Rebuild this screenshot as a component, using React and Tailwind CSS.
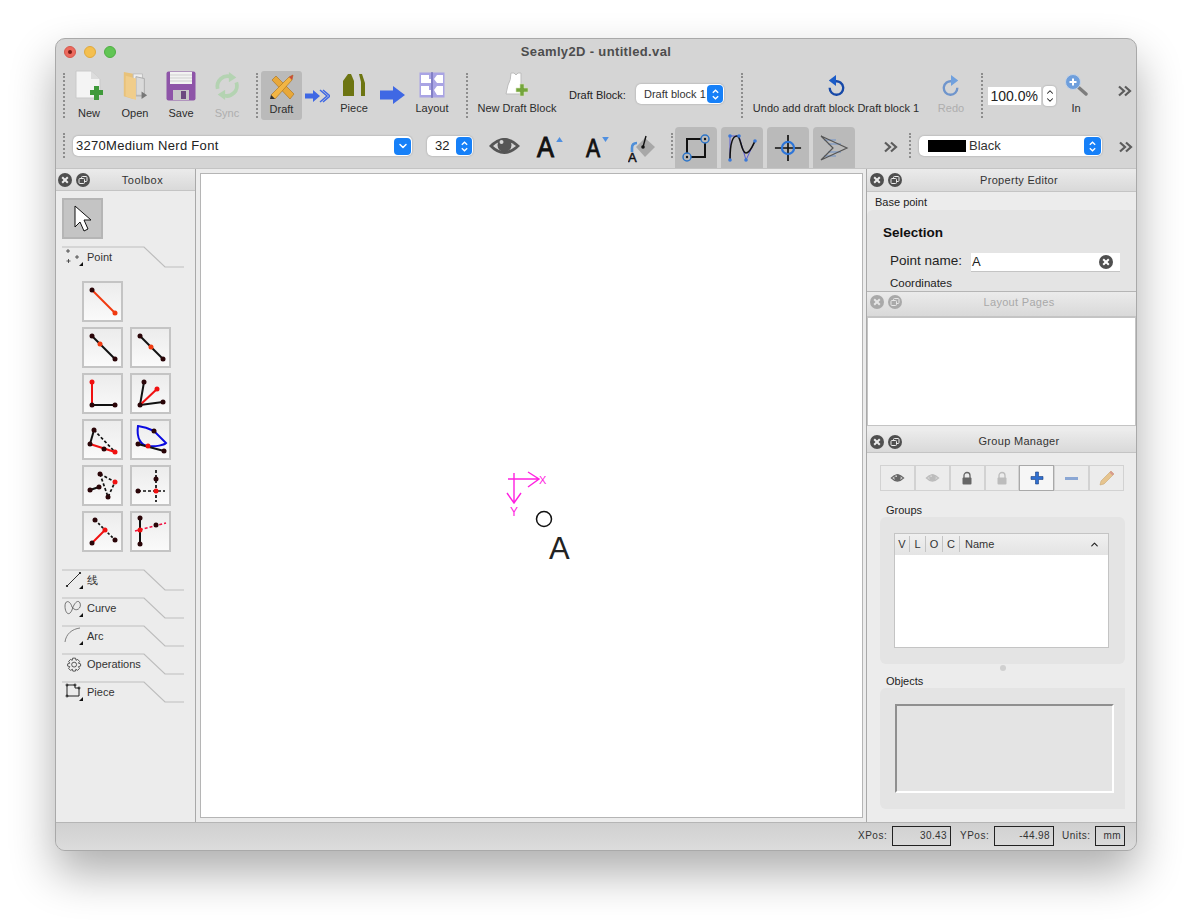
import { ChevronDown, ChevronUp } from 'lucide-react';

const FONT = { fontFamily: '"Liberation Sans", Arial, sans-serif' };

function Grip({ className = 'h-[45px]' }) {
  return <div className={`w-[2px] shrink-0 border-l-2 border-dotted border-[#8d8d8d] ${className}`} />;
}

function Chevrons() {
  return (
    <svg viewBox="0 0 16 12" className="w-[16px] h-[12px] shrink-0">
      <path d="M2 1.5 L7 6 L2 10.5 M8 1.5 L13 6 L8 10.5" fill="none" stroke="#5c5c5c" strokeWidth="2.2" />
    </svg>
  );
}

function UpDown({ className = 'w-[16px] h-[16px]' }) {
  return (
    <div className={`${className} rounded-[4px] bg-[#1680f8] flex items-center justify-center shrink-0`}>
      <svg viewBox="0 0 10 14" className="w-[9px] h-[13px]">
        <path d="M2 5 L5 2.2 L8 5 M2 9 L5 11.8 L8 9" fill="none" stroke="#fff" strokeWidth="1.5" />
      </svg>
    </div>
  );
}

function ToolBtn({ label, width, children, muted, active, top = 'pt-[1px]', gap = 'mt-[1px]', className = '' }) {
  return (
    <div className={`flex flex-col items-center shrink-0 ${top} ${active ? 'bg-[#bababa] rounded-[3px] h-[49px]' : ''} ${className}`} style={{ width }}>
      <div className="h-[32px] flex items-center justify-center">{children}</div>
      <span className={`text-[11px] leading-[13px] whitespace-nowrap ${gap} ${muted ? 'text-[#aeaeae]' : 'text-[#2c2c2c]'}`}>{label}</span>
    </div>
  );
}

function NewIcon() {
  return (
    <svg viewBox="0 0 30 32" className="w-[30px] h-[32px]">
      <path d="M2 1 H17 L26 9 V28 H2 Z" fill="#f4f4f4" stroke="#c9c9c9" />
      <path d="M17 1 V9 H26 Z" fill="#dcdcdc" />
      <path d="M16 20 H20 V16 H25 V20 H29 V25 H25 V30 H20 V25 H16 Z" fill="#3f9a3a" />
    </svg>
  );
}

function OpenIcon() {
  return (
    <svg viewBox="0 0 30 32" className="w-[28px] h-[32px]">
      <path d="M3 1 L13 3 V30 L3 27 Z" fill="#e8c27a" />
      <path d="M13 3 H23 V27 H13 Z" fill="#eee" stroke="#bbb" />
      <path d="M16 6 L25 8 V26 H16 Z" fill="#dadada" stroke="#aaa" />
      <path d="M5 5 L16 8 V31 L5 27 Z" fill="#f0cd8b" />
      <path d="M22 22 L28 26 L22 30 Z" fill="#777" />
    </svg>
  );
}

function SaveIcon() {
  return (
    <svg viewBox="0 0 30 30" className="w-[30px] h-[30px]">
      <rect x="0.5" y="0.5" width="29" height="29" rx="2" fill="#8e54a8" />
      <rect x="4" y="1" width="22" height="12" fill="#f2f2f2" />
      <path d="M4 4 H26 M4 7 H26 M4 10 H26" stroke="#cfcfcf" />
      <rect x="7" y="19" width="16" height="10" fill="#c9c9c9" />
      <rect x="15" y="20" width="5" height="8" fill="#6c4a80" />
    </svg>
  );
}

function SyncIcon() {
  return (
    <svg viewBox="0 0 30 32" className="w-[28px] h-[32px]">
      <path d="M5 19 A11 11 0 0 1 19 6" fill="none" stroke="#b4d3b2" strokeWidth="4" />
      <path d="M17 1 L25 7 L17 12 Z" fill="#b4d3b2" />
      <path d="M25 12 A11 11 0 0 1 11 26" fill="none" stroke="#b4d3b2" strokeWidth="4" />
      <path d="M13 31 L5 25 L13 20 Z" fill="#b4d3b2" />
    </svg>
  );
}

function DraftIcon() {
  return (
    <svg viewBox="0 0 26 26" className="w-[26px] h-[26px]">
      <path d="M3 6 L7 2 L25 20 L21 25 Z" fill="#e8a83a" stroke="#a9701a" strokeWidth="0.6" />
      <path d="M2 21 L20 3 L24 1 L23 6 L6 25 Z" fill="#f2b544" stroke="#a9701a" strokeWidth="0.6" />
      <path d="M20 3 L24 1 L23 6 Z" fill="#c94a3b" />
      <path d="M2 21 L6 25 L1 25 Z" fill="#333" />
    </svg>
  );
}

function SmallArrow() {
  return (
    <svg viewBox="0 0 25 14" className="w-[25px] h-[14px]">
      <path d="M0 4.5 H8 V1 L15 7 L8 13 V9.5 H0 Z" fill="#3f68e4" />
      <path d="M15 1 L22 7 L15 13 M18 1 L25 7 L18 13" fill="none" stroke="#3f68e4" strokeWidth="1.5" />
    </svg>
  );
}

function BigArrow() {
  return (
    <svg viewBox="0 0 25 18" className="w-[25px] h-[18px]">
      <path d="M0 4.5 H13 V0 L25 9 L13 18 V13.5 H0 Z" fill="#3f68e4" />
    </svg>
  );
}

function PieceIcon() {
  return (
    <svg viewBox="0 0 24 24" className="w-[24px] h-[24px]">
      <path d="M1 23 V8 L6 1 H9 L12 8 V23 Z" fill="#6d7512" />
      <path d="M17 1 H20 L23 10 V23 H19 V9 Z" fill="#6d7512" />
    </svg>
  );
}

function LayoutIcon() {
  return (
    <svg viewBox="0 0 26 26" className="w-[26px] h-[26px]">
      <rect x="0.5" y="0.5" width="25" height="25" fill="#a9a4e4" />
      <path d="M2 3 H10 V7 H12 V11 H2 Z M2 14 H10 V18 H12 V23 H2 Z M24 3 V11 H18 L15 7 L18 3 Z M24 14 V23 H18 L15 18 L18 14 Z" fill="#fff" />
      <path d="M13 0 V26" stroke="#5a5aa8" />
    </svg>
  );
}

function NewBlockIcon() {
  return (
    <svg viewBox="0 0 24 26" className="w-[24px] h-[26px]">
      <path d="M6 1 H9 L11 3 L13 1 H16 V22 H1 L3 13 Q6 8 6 1 Z" fill="#fff" stroke="#bdbdbd" />
      <path d="M11 16 H15 V12 H19 V16 H23 V20 H19 V24 H15 V20 H11 Z" fill="#74a53c" stroke="#d6e3b8" strokeWidth="0.6" />
    </svg>
  );
}

function UndoIcon() {
  return (
    <svg viewBox="0 0 20 24" className="w-[18px] h-[22px]">
      <path d="M9 8 A7.5 7.5 0 1 1 3 15" fill="none" stroke="#1749a8" strokeWidth="2.6" />
      <path d="M10 1 L2 7 L10 13 Z" fill="#1b5cc8" />
    </svg>
  );
}

function RedoIcon() {
  return (
    <svg viewBox="0 0 20 24" className="w-[18px] h-[22px]">
      <path d="M11 8 A7.5 7.5 0 1 0 17 15" fill="none" stroke="#6f95cc" strokeWidth="2.6" />
      <path d="M10 1 L18 7 L10 13 Z" fill="#6fa0de" />
    </svg>
  );
}

function ZoomIcon() {
  return (
    <svg viewBox="0 0 24 24" className="w-[24px] h-[24px]">
      <path d="M13 13 L22 21" stroke="#7d7d7d" strokeWidth="3.4" strokeLinecap="round" />
      <circle cx="9" cy="9" r="7.5" fill="#6f9fdc" stroke="#c4d3e6" />
      <path d="M5.5 9 H12.5 M9 5.5 V12.5" stroke="#fff" strokeWidth="2" />
    </svg>
  );
}

function EyeIcon({ fill = '#555', className = 'w-[33px] h-[22px]' }) {
  return (
    <svg viewBox="0 0 33 22" className={className}>
      <path d="M1 11 Q16 -5 32 11 Q16 27 1 11 Z" fill={fill} />
      <path d="M5 11 Q16 1 28 11 Q16 21 5 11 Z" fill="#d5d5d5" />
      <circle cx="16.5" cy="10" r="7" fill={fill} />
      <circle cx="13.5" cy="7" r="2" fill="#d5d5d5" />
    </svg>
  );
}

function PaintIcon() {
  return (
    <svg viewBox="0 0 28 32" className="w-[28px] h-[32px]">
      <path d="M17 5 L27 14 L17 24 L8 14 Z" fill="#a8a8a8" />
      <path d="M15 14 L18 3" stroke="#111" strokeWidth="1.4" />
      <circle cx="15" cy="14" r="1.8" fill="#111" />
      <path d="M4 19 V15 Q4 10 9 10" fill="none" stroke="#4f8fd8" strokeWidth="2.6" />
      <text x="0" y="29" fontSize="13" fill="#111" stroke="#111" strokeWidth="0.5" style={FONT}>A</text>
    </svg>
  );
}

function ModeButton({ children }) {
  return <div className="w-[42px] h-[41px] bg-[#bababa] rounded-t-[4px] flex items-center justify-center shrink-0">{children}</div>;
}

function RectIcon() {
  return (
    <svg viewBox="0 0 28 28" className="w-[28px] h-[28px]">
      <path d="M5 5 H23 V23 H5 Z" fill="none" stroke="#111" strokeWidth="2" />
      <circle cx="23" cy="5" r="4" fill="#bababa" stroke="#2d75c8" strokeWidth="1.5" />
      <circle cx="5" cy="23" r="4" fill="#bababa" stroke="#2d75c8" strokeWidth="1.5" />
      <circle cx="23" cy="5" r="1.2" fill="#111" />
      <circle cx="5" cy="23" r="1.2" fill="#111" />
    </svg>
  );
}

function SplineIcon() {
  return (
    <svg viewBox="0 0 30 30" className="w-[30px] h-[30px]">
      <path d="M3 27 L3 3 L12 3 L19 27 L28 8" fill="none" stroke="#5b5bd6" strokeWidth="1" />
      <path d="M3 27 C3 8 6 3 10 3 C14 3 14 20 19 20 C23 20 26 12 28 8" fill="none" stroke="#111" strokeWidth="1.6" />
      <circle cx="3" cy="27" r="1.8" fill="#3a78d8" />
      <circle cx="3" cy="3" r="1.8" fill="#3a78d8" />
      <circle cx="12" cy="3" r="1.8" fill="#3a78d8" />
      <circle cx="19" cy="27" r="1.8" fill="#3a78d8" />
      <circle cx="28" cy="8" r="1.8" fill="#3a78d8" />
    </svg>
  );
}

function PointModeIcon() {
  return (
    <svg viewBox="0 0 30 30" className="w-[28px] h-[28px]">
      <path d="M15 1 V29 M1 15 H29" stroke="#111" strokeWidth="1.8" />
      <circle cx="15" cy="15" r="6.5" fill="none" stroke="#2d75d8" strokeWidth="2.4" />
    </svg>
  );
}

function PieceModeIcon() {
  return (
    <svg viewBox="0 0 30 30" className="w-[30px] h-[30px]">
      <path d="M5 7 H17 M9 11 H22 M9 19 H22 M5 23 H17" stroke="#6d8fc8" strokeWidth="1.2" />
      <path d="M2 3 L28 15 L2 27 M2 3 L14 15 L2 27" fill="none" stroke="#555" strokeWidth="1.2" />
    </svg>
  );
}

function DockButtons({ dim }) {
  const bg = dim ? '#a9a9a9' : '#4f4f4f';
  const fg = dim ? '#e6e6e6' : '#ececec';
  return (
    <div className="flex items-center gap-[4px]">
      <svg viewBox="0 0 14 14" className="w-[14px] h-[14px]">
        <circle cx="7" cy="7" r="7" fill={bg} />
        <path d="M4.2 4.2 L9.8 9.8 M9.8 4.2 L4.2 9.8" stroke={fg} strokeWidth="2" />
      </svg>
      <svg viewBox="0 0 14 14" className="w-[14px] h-[14px]">
        <circle cx="7" cy="7" r="7" fill={bg} />
        <rect x="5.5" y="3.5" width="5.5" height="5" rx="1" fill="none" stroke={fg} />
        <rect x="3" y="5.5" width="5.5" height="5" rx="1" fill={bg} stroke={fg} />
      </svg>
    </div>
  );
}

function DockTitle({ title, dim, className = 'h-[23px]' }) {
  return (
    <div className={`${className} shrink-0 flex items-center pl-[3px] bg-gradient-to-b from-[#ebebeb] to-[#d9d9d9] border-b border-[#c4c4c4]`}>
      <DockButtons dim={dim} />
      <span className={`flex-1 text-center text-[11px] tracking-[0.3px] ${dim ? 'text-[#a9a9a9]' : 'text-[#333]'}`}>{title}</span>
    </div>
  );
}

const dot = (x, y, fill = '#2a0508', r = 2.5) => <circle cx={x} cy={y} r={r} fill={fill} />;
const RED = '#f01010';
const ORANGE = '#f03a10';

const TOOLS = [
  <>
    <path d="M10 9 L33 32" stroke={ORANGE} strokeWidth="2" />
    {dot(10, 9)}{dot(33, 32, ORANGE)}
  </>,
  <>
    <path d="M10 9 L33 32" stroke="#111" strokeWidth="2" />
    {dot(10, 9)}{dot(33, 32)}{dot(18, 17, ORANGE)}
  </>,
  <>
    <path d="M10 9 L33 32" stroke="#111" strokeWidth="2" />
    {dot(10, 9)}{dot(33, 32)}{dot(21, 20, ORANGE)}
  </>,
  <>
    <path d="M10 9 V32" stroke={RED} strokeWidth="2" />
    <path d="M10 32 H33" stroke="#111" strokeWidth="2" />
    {dot(10, 9, RED)}{dot(10, 32)}{dot(33, 32)}
  </>,
  <>
    <path d="M10 32 L14 9 M10 32 L33 29" stroke="#111" strokeWidth="2" />
    <path d="M10 32 L27 16" stroke={RED} strokeWidth="2" />
    {dot(14, 9)}{dot(10, 32)}{dot(27, 16, RED)}{dot(33, 29)}
  </>,
  <>
    <path d="M12 11 L8 25" stroke="#111" strokeWidth="2" />
    <path d="M12 11 L33 33" stroke="#111" strokeWidth="1.7" strokeDasharray="3 2" />
    <path d="M8 25 L33 33" stroke={RED} strokeWidth="2" />
    {dot(12, 11)}{dot(8, 25)}{dot(22, 30)}{dot(33, 33, RED)}
  </>,
  <>
    <path d="M8 7 C6 20 12 27 18 27 C26 28 34 26 36 24 L24 12 Q16 8 8 7 Z" fill="none" stroke="#0a0ae0" strokeWidth="2" />
    <path d="M8 25 L34 32" stroke="#111" strokeWidth="2" />
    {dot(24, 12)}{dot(8, 25)}{dot(34, 32)}{dot(18, 27, RED)}
  </>,
  <>
    <path d="M8 25 L17 22" stroke="#111" strokeWidth="2" />
    <path d="M18 9 L33 17 L26 32 Z" fill="none" stroke="#111" strokeWidth="1.7" strokeDasharray="3 2" />
    {dot(18, 9)}{dot(33, 17, RED)}{dot(26, 32)}{dot(17, 22)}{dot(8, 25)}
  </>,
  <>
    <path d="M26 5 V37 M8 26 H35" stroke="#111" strokeWidth="1.7" strokeDasharray="3 2" />
    {dot(26, 14)}{dot(8, 26)}{dot(26, 26, RED)}
  </>,
  <>
    <path d="M13 9 L33 29" stroke="#111" strokeWidth="1.7" strokeDasharray="2.5 2" />
    <path d="M10 32 L23 19" stroke={RED} strokeWidth="2" />
    {dot(13, 9)}{dot(33, 29)}{dot(10, 32)}{dot(23, 19, RED)}
  </>,
  <>
    <path d="M10 7 V33" stroke="#111" strokeWidth="2" />
    <path d="M5 20 L36 12" stroke="#f01040" strokeWidth="1.7" strokeDasharray="3 2" />
    {dot(10, 7)}{dot(10, 33)}{dot(26, 14)}{dot(10, 19, RED)}
  </>,
];

function ToolTile({ children }) {
  return (
    <div className="w-[41px] h-[41px] border-2 border-[#c4c4c4] bg-gradient-to-b from-[#ececec] to-[#fafafa] shrink-0">
      <svg viewBox="2 2 37 37" className="w-[37px] h-[37px]">{children}</svg>
    </div>
  );
}

function Tab({ label, icon, className = 'h-[28px]' }) {
  return (
    <div className={`relative pl-[6px] flex items-start ${className}`}>
      <svg viewBox="0 0 122 22" className="absolute left-[6px] top-0 w-[122px] h-[22px]">
        <path d="M0 1 H82 L103 21 H122" fill="none" stroke="#bdbdbd" strokeWidth="1.2" />
      </svg>
      <div className="w-[24px] h-[22px] flex items-center justify-center">{icon}</div>
      <span className="text-[11px] leading-[22px] ml-[1px] text-[#333]">{label}</span>
    </div>
  );
}

const corner = <path d="M20 16 V20 H16 Z" fill="#111" />;

function PointTabIcon() {
  return (
    <svg viewBox="0 0 22 22" className="w-[22px] h-[22px]">
      <path d="M5 3 V7 M3 5 H7 M5.5 13 V17 M3.5 15 H7.5 M14 9 V13 M12 11 H16" stroke="#333" strokeWidth="0.8" />
      {corner}
    </svg>
  );
}

function LineTabIcon() {
  return (
    <svg viewBox="0 0 22 22" className="w-[22px] h-[22px]">
      <path d="M4 17 L17 4" stroke="#333" />
      <circle cx="4" cy="17" r="1.1" fill="#111" /><circle cx="17" cy="4" r="1.1" fill="#111" />
      {corner}
    </svg>
  );
}

function CurveTabIcon() {
  return (
    <svg viewBox="0 0 22 22" className="w-[22px] h-[22px]">
      <path d="M9 10 C7 3 2 3 2 9 C2 16 6 20 9 13 C11 6 15 2 17 6 C19 11 13 16 9 10 Z" fill="none" stroke="#555" strokeWidth="0.8" />
      {corner}
    </svg>
  );
}

function ArcTabIcon() {
  return (
    <svg viewBox="0 0 22 22" className="w-[22px] h-[22px]">
      <path d="M2 17 C3 9 9 4 17 3" fill="none" stroke="#666" strokeWidth="0.8" />
      {corner}
    </svg>
  );
}

function GearTabIcon() {
  return (
    <svg viewBox="0 0 22 22" className="w-[22px] h-[22px]">
      <g transform="translate(3.2 3.7) scale(0.72)">
        <path d="M9 2 H13 L13.6 5 L16 3.8 L18.6 6.6 L17 9 L20 10 V13 L17 13.8 L18.4 16.4 L15.8 19 L13.4 17.4 L12.8 20 H9.2 L8.6 17.4 L6 19 L3.4 16.4 L5 13.8 L2 13 V10 L5 9 L3.4 6.6 L6 3.8 L8.4 5 Z" fill="none" stroke="#333" strokeWidth="1.1" />
        <circle cx="11" cy="11" r="3.4" fill="none" stroke="#333" strokeWidth="1.1" />
      </g>
    </svg>
  );
}

function PieceTabIcon() {
  return (
    <svg viewBox="0 0 22 22" className="w-[22px] h-[22px]">
      <path d="M4 4 V15 H16 V7 H12 V4 Z" fill="none" stroke="#222" />
      <path d="M2.5 4 H5.5 M4 2.5 V5.5 M10.5 4 H13.5 M12 2.5 V5.5 M14.5 7 H17.5 M16 5.5 V8.5 M2.5 15 H5.5 M4 13.5 V16.5" stroke="#222" strokeWidth="1" />
      {corner}
    </svg>
  );
}

function GroupBtn({ children, active }) {
  return (
    <div className={`h-[26px] flex-1 flex items-center justify-center border ${active ? 'border-[#a9a9a9] bg-[#f6f6f6]' : 'border-[#d2d2d2] bg-[#ececec]'}`}>
      {children}
    </div>
  );
}

function LockIcon({ color }) {
  return (
    <svg viewBox="0 0 12 14" className="w-[12px] h-[14px]">
      <path d="M3 7 V4.5 A3 3 0 0 1 9 4.5 V7" fill="none" stroke={color} strokeWidth="1.3" />
      <rect x="1.5" y="6.5" width="9" height="7" rx="1" fill={color} />
    </svg>
  );
}

function StatusField({ label, value, labelW, fieldW }) {
  return (
    <>
      <span className="text-[10px] tracking-[0.5px] text-[#333] whitespace-nowrap" style={{ width: labelW }}>{label}</span>
      <div className="h-[20px] border border-[#222] flex items-center justify-end pr-[3px] text-[10px] tracking-[0.4px] text-[#333]" style={{ width: fieldW }}>{value}</div>
    </>
  );
}

export default function App() {
  return (
    <div className="w-[1192px] h-[924px] bg-white pt-[38px] pl-[55px] overflow-hidden" style={FONT}>
      <div className="w-[1082px] h-[813px] flex flex-col rounded-[10px] border border-[#a9a9a9] overflow-hidden shadow-[0_22px_45px_rgba(0,0,0,0.32)] bg-[#d5d5d5]">
        {/* Title bar */}
        <div className="h-[29px] shrink-0 grid grid-cols-[1fr_auto_1fr] items-center pb-[3px]">
          <div className="flex items-center gap-[8px] pl-[8px]">
            <div className="w-[12px] h-[12px] rounded-full bg-[#ec6a5e] border border-[#d5574c] flex items-center justify-center">
              <div className="w-[4px] h-[4px] rounded-full bg-[#7a1a14]" />
            </div>
            <div className="w-[12px] h-[12px] rounded-full bg-[#f4bf4f] border border-[#dfa93c]" />
            <div className="w-[12px] h-[12px] rounded-full bg-[#61c554] border border-[#4fae43]" />
          </div>
          <span className="text-[13px] font-bold tracking-[0.35px] text-[#4d4d4d]">Seamly2D - untitled.val</span>
          <div />
        </div>

        {/* Main toolbar */}
        <div className="h-[54px] shrink-0 flex items-start">
          <Grip className="h-[45px] ml-[7px] mt-[5px]" />
          <div className="flex ml-[1px]">
            <ToolBtn label="New" width={46} top="pt-[2px]" gap="mt-[5px]"><NewIcon /></ToolBtn>
            <ToolBtn label="Open" width={46} top="pt-[2px]" gap="mt-[5px]"><OpenIcon /></ToolBtn>
            <ToolBtn label="Save" width={46} top="pt-[2px]" gap="mt-[5px]"><SaveIcon /></ToolBtn>
            <ToolBtn label="Sync" width={46} top="pt-[2px]" muted gap="mt-[5px]"><SyncIcon /></ToolBtn>
          </div>
          <Grip className="h-[45px] ml-[6px] mt-[5px]" />
          <ToolBtn label="Draft" width={41} active top="pt-0" gap="mt-0" className="ml-[3px] mt-[3px]"><DraftIcon /></ToolBtn>
          <div className="ml-[3px] mt-[21px]"><SmallArrow /></div>
          <ToolBtn label="Piece" width={40} className="ml-[4px]"><PieceIcon /></ToolBtn>
          <div className="ml-[6px] mt-[18px]"><BigArrow /></div>
          <ToolBtn label="Layout" width={44} className="ml-[5px]"><LayoutIcon /></ToolBtn>
          <Grip className="h-[45px] ml-[12px] mt-[5px]" />
          <ToolBtn label="New Draft Block" width={84} className="ml-[7px]"><NewBlockIcon /></ToolBtn>
          <span className="ml-[10px] mt-[20px] w-[57px] shrink-0 text-[11px] leading-[14px] text-[#222] whitespace-nowrap">Draft Block:</span>
          <div className="ml-[10px] mt-[16px] w-[88px] h-[20px] shrink-0 bg-white rounded-[5px] shadow-[0_0_2px_rgba(0,0,0,0.3)] flex items-center pl-[8px] pr-[1px] justify-between">
            <span className="text-[11px] text-[#333] whitespace-nowrap">Draft block 1</span>
            <UpDown className="w-[16px] h-[18px]" />
          </div>
          <Grip className="h-[45px] ml-[17px] mt-[5px]" />
          <ToolBtn label="Undo add draft block Draft block 1" width={166} className="ml-[10px]"><UndoIcon /></ToolBtn>
          <ToolBtn label="Redo" width={40} muted className="ml-[12px]"><RedoIcon /></ToolBtn>
          <Grip className="h-[45px] ml-[10px] mt-[5px]" />
          <div className="ml-[5px] mt-[18px] flex items-center shrink-0">
            <div className="w-[53px] h-[18px] bg-white flex items-center justify-end pr-[3px] text-[14px] text-[#222]">100.0%</div>
            <div className="ml-[2px] w-[13px] h-[20px] bg-white rounded-[4px] shadow-[0_0_2px_rgba(0,0,0,0.3)] flex flex-col items-center justify-center">
              <ChevronUp size={10} strokeWidth={2.5} className="text-[#222] -mb-[1px]" />
              <ChevronDown size={10} strokeWidth={2.5} className="text-[#222] -mt-[1px]" />
            </div>
          </div>
          <ToolBtn label="In" width={30} className="ml-[5px]"><ZoomIcon /></ToolBtn>
          <div className="ml-[26px] mt-[17px]"><Chevrons /></div>
        </div>

        {/* Format toolbar */}
        <div className="h-[46px] shrink-0 flex items-start">
          <Grip className="h-[25px] ml-[7px] mt-[11px]" />
          <div className="ml-[8px] mt-[14px] w-[339px] h-[20px] shrink-0 bg-white rounded-[5px] shadow-[0_0_2px_rgba(0,0,0,0.3)] flex items-center pl-[3px] pr-[1px] justify-between">
            <span className="text-[13px] tracking-[0.3px] text-[#222]">3270Medium Nerd Font</span>
            <div className="w-[17px] h-[17px] rounded-[4px] bg-[#1680f8] flex items-center justify-center">
              <ChevronDown size={12} strokeWidth={3} className="text-white" />
            </div>
          </div>
          <div className="ml-[15px] mt-[14px] w-[46px] h-[20px] shrink-0 bg-white rounded-[5px] shadow-[0_0_2px_rgba(0,0,0,0.3)] flex items-center pl-[8px] pr-[1px] justify-between">
            <span className="text-[13px] text-[#222]">32</span>
            <UpDown className="w-[16px] h-[18px]" />
          </div>
          <div className="ml-[15px] mt-[13px]"><EyeIcon /></div>
          <div className="ml-[16px] mt-[10px] w-[34px] h-[32px] shrink-0 flex items-start">
            <span className="text-[30px] leading-[30px] text-[#111] scale-x-[0.85] origin-left [-webkit-text-stroke:1px_#111]">A</span>
            <svg viewBox="0 0 8 6" className="w-[7px] h-[5px] mt-[5px] -ml-[1px]"><path d="M0 6 L4 0 L8 6 Z" fill="#4f8fe0" /></svg>
          </div>
          <div className="ml-[15px] mt-[13px] w-[30px] h-[30px] shrink-0 flex items-start">
            <span className="text-[25px] leading-[26px] text-[#111] scale-x-[0.85] origin-left [-webkit-text-stroke:0.8px_#111]">A</span>
            <svg viewBox="0 0 8 6" className="w-[7px] h-[5px] mt-[2px] -ml-[1px]"><path d="M0 0 L8 0 L4 6 Z" fill="#4f8fe0" /></svg>
          </div>
          <div className="ml-[12px] mt-[11px]"><PaintIcon /></div>
          <Grip className="h-[25px] ml-[15px] mt-[11px]" />
          <div className="ml-[2px] mt-[5px] flex gap-[4px]">
            <ModeButton><RectIcon /></ModeButton>
            <ModeButton><SplineIcon /></ModeButton>
            <ModeButton><PointModeIcon /></ModeButton>
            <ModeButton><PieceModeIcon /></ModeButton>
          </div>
          <div className="ml-[28px] mt-[19px]"><Chevrons /></div>
          <Grip className="h-[25px] ml-[10px] mt-[11px]" />
          <div className="ml-[8px] mt-[14px] w-[183px] h-[20px] shrink-0 bg-white rounded-[5px] shadow-[0_0_2px_rgba(0,0,0,0.3)] flex items-center pl-[9px] pr-[1px]">
            <div className="w-[38px] h-[12px] bg-black" />
            <span className="ml-[3px] text-[13px] text-[#333] flex-1">Black</span>
            <UpDown className="w-[17px] h-[18px]" />
          </div>
          <div className="ml-[16px] mt-[19px]"><Chevrons /></div>
        </div>

        {/* Body */}
        <div className="flex-1 min-h-0 flex bg-[#ececec] border-t border-[#c4c4c4]">
          {/* Toolbox */}
          <div className="w-[140px] shrink-0 border-r border-[#a9a9a9] flex flex-col">
            <div className="h-[22px] shrink-0 flex items-center pl-[2px] bg-gradient-to-b from-[#ebebeb] to-[#d9d9d9] border-b border-[#c4c4c4]">
              <DockButtons />
              <span className="flex-1 text-center text-[11px] pt-[1px] tracking-[0.5px] text-[#333]">Toolbox</span>
            </div>
            <div className="ml-[6px] mt-[7px] w-[41px] h-[41px] bg-[#c4c4c4] border-2 border-[#b5b5b5] flex items-center justify-center">
              <svg viewBox="0 0 18 28" className="w-[18px] h-[28px]">
                <path d="M1 1 V22 L6 17 L10 26 L14 24 L10 15 L17 15 Z" fill="#fff" stroke="#111" strokeWidth="1" />
              </svg>
            </div>
            <Tab label="Point" icon={<PointTabIcon />} className="h-[35px] mt-[7px]" />
            <div className="ml-[26px] flex flex-col gap-[5px]">
              <ToolTile>{TOOLS[0]}</ToolTile>
              {[1, 3, 5, 7, 9].map((i) => (
                <div key={i} className="flex gap-[7px]">
                  <ToolTile>{TOOLS[i]}</ToolTile>
                  <ToolTile>{TOOLS[i + 1]}</ToolTile>
                </div>
              ))}
            </div>
            <div className="mt-[17px]">
              <Tab label="线" icon={<LineTabIcon />} />
              <Tab label="Curve" icon={<CurveTabIcon />} />
              <Tab label="Arc" icon={<ArcTabIcon />} />
              <Tab label="Operations" icon={<GearTabIcon />} />
              <Tab label="Piece" icon={<PieceTabIcon />} />
            </div>
          </div>

          {/* Canvas */}
          <div className="w-[670px] shrink-0 px-[4px] pt-[4px] pb-[4px]">
            <div className="relative w-[663px] h-[645px] bg-white border border-[#b5b5b5]">
              <svg viewBox="0 0 75 100" className="absolute left-[300px] top-[295px] w-[75px] h-[100px]">
                <path d="M7 10 H38 M27 3 L38 10 L27 18 M13 4 V34 M6 24 L13 34 L20 24" fill="none" stroke="#ff20e0" strokeWidth="1.4" />
                <text x="38" y="14.5" fontSize="11" fill="#ff20e0" style={FONT}>X</text>
                <text x="9" y="47" fontSize="12" fill="#ff20e0" style={FONT}>Y</text>
                <circle cx="43" cy="50" r="7.5" fill="none" stroke="#111" strokeWidth="1.5" />
                <text x="48" y="90" fontSize="31" fill="#222" style={FONT}>A</text>
              </svg>
            </div>
          </div>

          {/* Right docks */}
          <div className="flex-1 min-w-0 border-l border-[#a9a9a9] flex flex-col">
            <DockTitle title="Property Editor" />
            <div className="h-[99px] shrink-0 overflow-hidden">
              <div className="h-[18px] pl-[8px] pt-[1px] text-[11px] leading-[18px] text-[#222]">Base point</div>
              <div className="h-[81px] bg-[#e4e4e4] rounded-tl-[6px] pl-[16px] pt-[15px]">
                <div className="text-[13.5px] leading-[16px] font-bold text-[#111]">Selection</div>
                <div className="flex items-center mt-[10px] pl-[7px]">
                  <span className="w-[81px] pb-[2px] text-[13.5px] text-[#222]">Point name:</span>
                  <div className="w-[149px] h-[19px] bg-white border-b border-[#c4c4c4] flex items-center justify-between pl-[1px] pr-[7px]">
                    <span className="text-[13px] text-[#222]">A</span>
                    <svg viewBox="0 0 14 14" className="w-[14px] h-[14px]">
                      <circle cx="7" cy="7" r="7" fill="#4f4f4f" />
                      <path d="M4.2 4.2 L9.8 9.8 M9.8 4.2 L4.2 9.8" stroke="#fff" strokeWidth="2" />
                    </svg>
                  </div>
                </div>
                <div className="pl-[7px] mt-[3px] text-[11.5px] leading-[14px] text-[#222]">Coordinates</div>
              </div>
            </div>
            <div className="border-t border-[#b5b5b5]">
              <DockTitle title="Layout Pages" dim className="h-[25px] pb-[4px]" />
            </div>
            <div className="h-[109px] shrink-0 bg-white border border-[#c4c4c4]" />
            <div className="h-[5px] shrink-0" />
            <DockTitle title="Group Manager" className="h-[22px]" />
            <div className="flex-1 min-h-0 px-[13px] pt-[12px]">
              <div className="flex w-[244px]">
                <GroupBtn><EyeIcon fill="#666" className="w-[15px] h-[10px]" /></GroupBtn>
                <GroupBtn><EyeIcon fill="#bcbcbc" className="w-[15px] h-[10px]" /></GroupBtn>
                <GroupBtn><LockIcon color="#666" /></GroupBtn>
                <GroupBtn><LockIcon color="#bcbcbc" /></GroupBtn>
                <GroupBtn active>
                  <svg viewBox="0 0 14 14" className="w-[14px] h-[14px]"><path d="M5.5 1 H8.5 V5.5 H13 V8.5 H8.5 V13 H5.5 V8.5 H1 V5.5 H5.5 Z" fill="#2f6fd0" stroke="#1c3f7e" strokeWidth="0.6" /></svg>
                </GroupBtn>
                <GroupBtn><div className="w-[13px] h-[3px] bg-[#8ba7d4]" /></GroupBtn>
                <GroupBtn>
                  <svg viewBox="0 0 16 16" className="w-[16px] h-[16px]">
                    <path d="M12 1 L15 4 L5 14 L1 15 L2 11 Z" fill="#e6c48e" stroke="#c9a873" strokeWidth="0.6" />
                    <path d="M12 1 L15 4 L13.5 5.5 L10.5 2.5 Z" fill="#d89a90" />
                  </svg>
                </GroupBtn>
              </div>
              <div className="ml-[6px] mt-[13px] text-[11px] leading-[13px] text-[#222]">Groups</div>
              <div className="h-[147px] w-[245px] bg-[#e4e4e4] rounded-[6px] pl-[14px] pt-[16px]">
                <div className="w-[215px] h-[115px] bg-white border border-[#c4c4c4] flex flex-col">
                  <div className="h-[21px] shrink-0 flex items-center pb-[1px] bg-gradient-to-b from-[#f0f0f0] to-[#e4e4e4] text-[11px] text-[#333]">
                    <span className="w-[15px] text-center border-r border-[#c4c4c4]">V</span>
                    <span className="w-[16px] text-center border-r border-[#c4c4c4]">L</span>
                    <span className="w-[17px] text-center border-r border-[#c4c4c4]">O</span>
                    <span className="w-[17px] text-center border-r border-[#c4c4c4]">C</span>
                    <span className="ml-[5px] flex-1">Name</span>
                    <ChevronUp size={11} strokeWidth={2.5} className="mr-[8px] text-[#222]" />
                  </div>
                </div>
              </div>
              <div className="w-[245px] h-[8px] flex items-center justify-center">
                <div className="w-[6px] h-[6px] rounded-full bg-[#d0d0d0]" />
              </div>
              <div className="ml-[6px] mt-[3px] text-[11px] leading-[13px] text-[#222]">Objects</div>
              <div className="h-[121px] w-[245px] bg-[#e4e4e4] rounded-l-[6px] pl-[15px] pt-[16px]">
                <div className="w-[219px] h-[89px] border-2 border-t-[#8f8f8f] border-l-[#8f8f8f] border-r-white border-b-white" />
              </div>
            </div>
          </div>
        </div>

        {/* Status bar */}
        <div className="h-[28px] shrink-0 flex items-center justify-end pr-[11px] pb-[2px] bg-gradient-to-b from-[#d0d0d0] to-[#dcdcdc] border-t border-[#b5b5b5]">
          <StatusField label="XPos:" value="30.43" labelW={34} fieldW={59} />
          <div className="w-[9px]" />
          <StatusField label="YPos:" value="-44.98" labelW={34} fieldW={60} />
          <div className="w-[8px]" />
          <StatusField label="Units:" value="mm" labelW={33} fieldW={30} />
        </div>
      </div>
    </div>
  );
}
